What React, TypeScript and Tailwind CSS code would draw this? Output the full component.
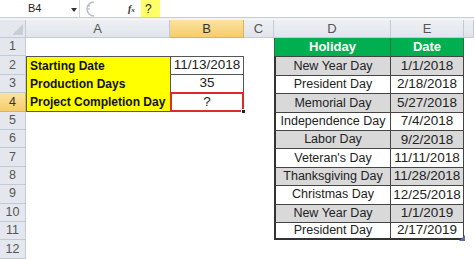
import React from "react";

const ROWS = 12;
const colHeaders = ["A", "B", "C", "D", "E", ""];

const holidays: [string, string][] = [
  ["New Year Day", "1/1/2018"],
  ["President Day", "2/18/2018"],
  ["Memorial Day", "5/27/2018"],
  ["Independence Day", "7/4/2018"],
  ["Labor Day", "9/2/2018"],
  ["Veteran's Day", "11/11/2018"],
  ["Thanksgiving Day", "11/28/2018"],
  ["Christmas Day", "12/25/2018"],
  ["New Year Day", "1/1/2019"],
  ["President Day", "2/17/2019"],
];

function FormulaBar() {
  return (
    <div className="flex h-[18px] items-stretch border-b border-[#c6ccd4] bg-white">
      {/* name box */}
      <div className="relative flex w-[80px] items-center border-r border-[#d3d8de]">
        <span className="ml-[28px] text-[11px] text-[#222]">B4</span>
        <svg className="absolute left-[71px] top-[8px]" width="6" height="4" viewBox="0 0 6 4">
          <path d="M0 0 L6 0 L3 4 Z" fill="#333" />
        </svg>
      </div>
      {/* grip / collapse */}
      <div className="relative w-[48px]">
        <svg className="absolute left-[2px] top-[1px]" width="14" height="16" viewBox="0 0 14 16">
          <path d="M12 1 A7 7 0 0 0 12 15" fill="none" stroke="#b8bfc8" strokeWidth="1.5" />
          <circle cx="7" cy="5" r="0.8" fill="#9aa3ad" />
          <circle cx="7" cy="8" r="0.8" fill="#9aa3ad" />
        </svg>
      </div>
      <div className="flex w-[13px] items-center">
        <span className="font-['Liberation_Serif'] text-[10px] font-bold italic text-[#333]">
          f<span className="text-[7px]">x</span>
        </span>
      </div>
      <div className="flex w-[19px] items-center bg-[#ffff66] pl-[4px] text-[12px] text-[#222]">?</div>
      <div className="flex-1" />
    </div>
  );
}

function DataCell({ row, col }: { row: number; col: number }) {
  // col: 0=A,1=B,2=C,3=D,4=E,5=F
  const base = "relative flex items-center overflow-visible whitespace-nowrap";

  if (col === 0 && row >= 2 && row <= 4) {
    const label = ["Starting Date", "Production Days", "Project Completion Day"][row - 2];
    return (
      <div
        className={`${base} bg-[#ffff00] pl-[3px] text-[12px] font-bold text-[#111] border-l border-[#555] ${
          row === 2 ? "border-t" : ""
        } ${row === 4 ? "border-b" : ""}`}
      >
        {label}
      </div>
    );
  }

  if (col === 1 && row >= 2 && row <= 4) {
    const val = ["11/13/2018", "35", "?"][row - 2];
    return (
      <div
        className={`${base} justify-center border-l border-r border-[#555] text-[13.5px] text-[#222] ${
          row === 2 ? "border-t" : ""
        } border-b`}
      >
        {val}
        {row === 4 && (
          <>
            <div className="absolute inset-[-1px] border-2 border-[#dd2a2a]" />
            <div className="absolute right-[-3px] bottom-[-3px] h-[5px] w-[5px] border border-white bg-[#222]" />
          </>
        )}
      </div>
    );
  }

  if ((col === 3 || col === 4) && row === 1) {
    return (
      <div
        className={`${base} justify-center border-r border-[#2e6b3f] bg-[#00b050] text-[13px] font-bold text-white ${
          col === 3 ? "border-l" : ""
        }`}
      >
        {col === 3 ? "Holiday" : "Date"}
      </div>
    );
  }

  if ((col === 3 || col === 4) && row >= 2 && row <= 11) {
    const h = holidays[row - 2];
    const gray = row % 2 === 0;
    return (
      <div
        className={`${base} justify-center border-t border-r border-[#444] ${
          gray ? "bg-[#d9d9d9]" : "bg-white"
        } ${col === 3 ? "border-l-2 border-l-[#333] text-[12.5px]" : "text-[13.5px]"} ${
          row === 11 ? "border-b-2 border-b-[#333]" : ""
        } text-[#222]`}
      >
        {col === 3 ? h[0] : h[1]}
        {col === 4 && row === 11 && (
          <svg className="absolute right-[-2px] bottom-[-3px]" width="6" height="6" viewBox="0 0 6 6">
            <path d="M6 0 L6 6 L0 6 Z" fill="#5a6fa8" />
          </svg>
        )}
      </div>
    );
  }

  return <div className={base} />;
}

export default function App() {
  return (
    <div className="h-[259px] w-[474px] overflow-hidden bg-white font-['Liberation_Sans',Arial,sans-serif]">
      <FormulaBar />
      <div className="h-[2px] bg-[#f3f4f6]" />
      <div className="grid grid-cols-[26px_144px_74px_30px_117px_73px_1fr] grid-rows-[18px_repeat(12,18.4px)]">
        {/* header row */}
        <div className="relative border-r border-b border-[#c4cad3] bg-[#e4e8ee]">
          <svg className="absolute right-[2px] bottom-[2px]" width="11" height="11" viewBox="0 0 11 11">
            <path d="M11 0 L11 11 L0 11 Z" fill="#c9ced6" />
          </svg>
        </div>
        {colHeaders.map((c, i) => (
          <div
            key={i}
            className={`flex items-center justify-center border-r border-b text-[13px] ${
              c === "B"
                ? "border-[#d9b45a] bg-gradient-to-b from-[#fbe3a0] to-[#f5cd69] text-[#333]"
                : "border-[#c4cad3] bg-gradient-to-b from-[#eef0f3] to-[#e1e5eb] text-[#555]"
            }`}
          >
            {c}
          </div>
        ))}
        {Array.from({ length: ROWS }, (_, r) => {
          const row = r + 1;
          return (
            <React.Fragment key={row}>
              <div
                className={`flex items-center justify-center border-r border-b text-[12.5px] ${
                  row === 4
                    ? "border-[#d9b45a] bg-gradient-to-b from-[#fbe3a0] to-[#f5cd69] text-[#333]"
                    : "border-[#c4cad3] bg-[#e4e8ee] text-[#555]"
                }`}
              >
                {row}
              </div>
              {[0, 1, 2, 3, 4, 5].map((col) => (
                <DataCell key={col} row={row} col={col} />
              ))}
            </React.Fragment>
          );
        })}
      </div>
    </div>
  );
}
